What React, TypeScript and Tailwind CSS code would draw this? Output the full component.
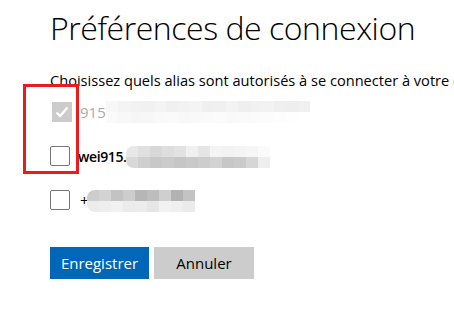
const Blur = ({ rows }: { rows: string[][] }) => (
    <div className="flex flex-col">
        {rows.map((row, i) => (
            <div key={i} className="flex">
                {row.map((c, j) => (
                    <div key={j} className="w-[12px] h-[11px]" style={{ backgroundColor: c }} />
                ))}
            </div>
        ))}
    </div>
)

const blur1 = [
    ['#f7f7f7', '#f4f4f4', '#f2f2f2', '#f1f1f1', '#f3f3f3', '#f0f0f0', '#f2f2f2', '#f4f4f4', '#efefef', '#f0f0f0', '#f3f3f3', '#efefef', '#f1f1f1', '#f2f2f2', '#efefef', '#eeeeee', '#f0f0f0'],
    ['#fafafa', '#f8f8f8', '#f6f6f6', '#f7f7f7', '#f9f9f9', '#fafafa', '#f8f8f8', '#f9f9f9', '#fafafa', '#fbfbfb', '#f9f9f9', '#fafafa', '#fbfbfb', '#fcfcfc', '#fdfdfd', '#fefefe', '#ffffff'],
]
const blur2 = [
    ['#e8e8e8', '#e0e0e0', '#d8d8d8', '#dedede', '#e2e2e2', '#f0f0f0', '#e6e6e6', '#f4f4f4', '#f2f2f2', '#f4f4f4', '#f6f6f6', '#fafafa'],
    ['#d9d9d9', '#cfcfcf', '#c8c8c8', '#cbcbcb', '#c6c6c6', '#c9c9c9', '#cdcdcd', '#d2d2d2', '#c7c7c7', '#cacaca', '#d6d6d6', '#eeeeee'],
]
const blur3 = [
    ['#cdcdcd', '#d3d3d3', '#c3c3c3', '#cdcdcd', '#b6b6b6', '#bdbdbd', '#cfcfcf', '#b2b2b2', '#c3c3c3'],
    ['#ececec', '#eeeeee', '#f1f1f1', '#ebebeb', '#ececec', '#e6e6e6', '#f2f2f2', '#efefef', '#ebebeb'],
]

const App = () => {
    return (
        <div className="relative w-[454px] h-[321px] overflow-hidden bg-white" style={{ fontFamily: '"Open Sans", "Liberation Sans", sans-serif' }}>
            <div className="pl-[50px] pt-[6px]">
                <h1 className="text-[32px] font-light leading-[44px] text-black whitespace-nowrap tracking-[-0.45px]">Préférences de connexion</h1>
                <p className="mt-[20px] text-[14.6px] leading-[20px] text-black whitespace-nowrap">Choisissez quels alias sont autorisés à se connecter à votre compte</p>

                <div className="mt-[12px] flex flex-col gap-[24px]">
                    <div className="flex items-center h-[20px]">
                        <div className="w-[20px] h-[20px] ml-[2px] bg-[#cccccc] flex items-center justify-center">
                            <svg width="14" height="12" viewBox="0 0 14 12">
                                <path d="M1.5 6.5 L5 10 L12.5 1.5" stroke="#fff" strokeWidth="2.4" fill="none" />
                            </svg>
                        </div>
                        <span className="ml-[8px] text-[15px] text-[#aaaaaa]">915</span>
                        <Blur rows={blur1} />
                    </div>
                    <div className="flex items-center h-[20px]">
                        <div className="w-[20px] h-[20px] border-[1.5px] border-[#777] rounded-[2px]" />
                        <span className="ml-[8px] text-[14px] font-semibold tracking-[-0.4px] text-black">wei915.</span>
                        <div className="rounded-l-[8px] overflow-hidden mt-[1px]"><Blur rows={blur2} /></div>
                    </div>
                    <div className="flex items-center h-[20px]">
                        <div className="w-[20px] h-[20px] border-[1.5px] border-[#777] rounded-[2px]" />
                        <span className="ml-[10px] text-[15px] text-black">+</span>
                        <div className="-ml-[2px] rounded-l-[8px] overflow-hidden mt-[1px]"><Blur rows={blur3} /></div>
                    </div>
                </div>

                <div className="mt-[37px] flex gap-[5px]">
                    <button className="w-[99px] h-[32px] bg-[#0067b8] text-white text-[15px]">Enregistrer</button>
                    <button className="w-[100px] h-[32px] bg-[#cccccc] text-black text-[15px]">Annuler</button>
                </div>
            </div>

            <div className="absolute left-[23px] top-[84px] w-[56px] h-[90px] border-[3px] border-[#e81c1c]" />
        </div>
    )
}

export default App
